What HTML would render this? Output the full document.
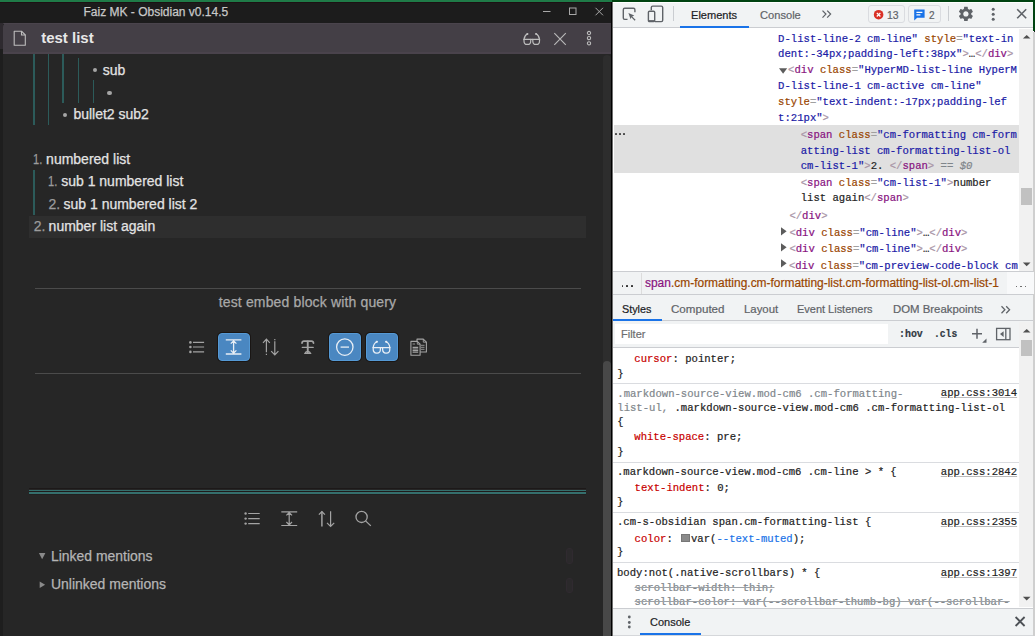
<!DOCTYPE html>
<html><head><meta charset="utf-8"><style>
html,body{margin:0;padding:0;width:1035px;height:636px;overflow:hidden;background:#1d1c1d;position:relative}
body>div,body>span{position:absolute;box-sizing:border-box}
.S{font-family:"Liberation Sans", sans-serif;white-space:pre}
.dk{-webkit-text-stroke:0.25px currentColor}
.dm span{-webkit-text-stroke:0.2px currentColor}
.dm{-webkit-text-stroke:0.2px currentColor}
.M{font-family:"Liberation Mono", monospace;white-space:pre}
</style></head><body>
<div style="left:0px;top:0px;width:612px;height:1.6px;background:#1f7b48"></div>
<div style="left:0px;top:1.6px;width:612px;height:1px;background:#1c1113"></div>
<div style="left:0px;top:2.6px;width:612px;height:20.4px;background:#1c1c1c"></div>
<span class="S dk" style="left:83.50px;top:5.54px;font-size:12px;line-height:12px;color:#c8c8c8;font-weight:400;">Faiz MK - Obsidian v0.14.5</span>
<svg style="position:absolute;left:540px;top:4px;" width="66" height="16" viewBox="0 0 66 16"><path d="M3 7.5h7.5" stroke="#a8a8a8" stroke-width="1"/><rect x="29.5" y="4" width="6.5" height="6.5" fill="none" stroke="#a8a8a8" stroke-width="1"/><path d="M55.5 3.8l7.5 7.5M63 3.8l-7.5 7.5" stroke="#a8a8a8" stroke-width="1"/></svg>
<div style="left:0px;top:23px;width:3px;height:26px;background:#2e2a2f"></div>
<div style="left:0px;top:49px;width:3px;height:587px;background:#1e1e1e"></div>
<div style="left:3px;top:23px;width:608px;height:31px;background:#443f46;border-top-left-radius:4px"></div>
<div style="left:3px;top:23px;width:608px;height:1px;background:#4a444c;border-top-left-radius:4px"></div>
<div style="left:3px;top:52.3px;width:608px;height:2px;background:#4a434c"></div>
<svg style="position:absolute;left:12px;top:29px;" width="16" height="18" viewBox="0 0 16 18"><path d="M2.2 2.2h7.3l3.8 3.8v10.3H2.2z" fill="none" stroke="#bdbdbd" stroke-width="1.1" stroke-linejoin="round"/><path d="M9.5 2.2v3.8h3.8" fill="none" stroke="#bdbdbd" stroke-width="1.1"/></svg>
<span class="S nostroke" style="left:41.20px;top:30.20px;font-size:15px;line-height:15px;color:#e8e8e8;font-weight:700;">test list</span>
<svg style="position:absolute;left:0;top:0" width="1035" height="636"><g transform="translate(524,39.4) scale(0.935)" fill="none" stroke="#bdbdbd" stroke-width="1.283" stroke-linecap="round"><path d="M0 0H16.6"/><path d="M0 0v1.6c0 2.1 1.4 3.8 3.3 3.8h.6c1.9 0 3.3-1.7 3.3-3.8V0"/><path d="M9.4 0v1.6c0 2.1 1.4 3.8 3.3 3.8h.6c1.9 0 3.3-1.7 3.3-3.8V0"/><path d="M0 0C0.2-2.6 1.5-4.9 3.8-6.1"/><circle cx="3.6" cy="-5.8" r="0.5"/><path d="M16.6 0C16.4-2.6 15.1-4.9 12.8-6.1"/><circle cx="13" cy="-5.8" r="0.5"/></g></svg>
<svg style="position:absolute;left:552px;top:31px;" width="16" height="16" viewBox="0 0 16 16"><path d="M2.3 2.2l11.5 11.7M13.8 2.2L2.3 13.9" stroke="#b8b8b8" stroke-width="1.15"/></svg>
<svg style="position:absolute;left:584px;top:29px;" width="10" height="18" viewBox="0 0 10 18"><g fill="none" stroke="#bdbdbd" stroke-width="1.05"><circle cx="5" cy="4" r="1.65"/><circle cx="5" cy="9.1" r="1.65"/><circle cx="5" cy="14.3" r="1.65"/></g></svg>
<div style="left:3px;top:54.3px;width:608px;height:582px;background:#262626"></div>
<div style="left:602.5px;top:55px;width:8.5px;height:581px;background:#2d2d2d;border-radius:4px 4px 0 0"></div>
<div style="left:603px;top:361px;width:8px;height:275px;background:#484848;border-radius:4px 4px 0 0"></div>
<div style="left:611px;top:23px;width:2px;height:613px;background:#141414"></div>
<div style="left:33.4px;top:54px;width:1.25px;height:70.8px;background:#2c5b5a"></div>
<div style="left:47.9px;top:54px;width:1.25px;height:70.8px;background:#2c5b5a"></div>
<div style="left:62.4px;top:54px;width:1.25px;height:48.599999999999994px;background:#2c5b5a"></div>
<div style="left:77.9px;top:57.9px;width:1.25px;height:44.699999999999996px;background:#2c5b5a"></div>
<div style="left:92.7px;top:80.2px;width:1.25px;height:22.39999999999999px;background:#2c5b5a"></div>
<div style="left:92.5px;top:67.8px;width:4.6px;height:4.6px;background:#a5a5a5;border-radius:50%"></div>
<span class="S dk" style="left:102.70px;top:62.65px;font-size:14px;line-height:14px;color:#e3e3e3;font-weight:400;">sub</span>
<div style="left:107.2px;top:90.5px;width:4.6px;height:4.6px;background:#a5a5a5;border-radius:50%"></div>
<div style="left:62.7px;top:112.7px;width:4.6px;height:4.6px;background:#a5a5a5;border-radius:50%"></div>
<span class="S dk" style="left:73.40px;top:107.25px;font-size:14px;line-height:14px;color:#e3e3e3;font-weight:400;">bullet2 sub2</span>
<span class="S dk" style="left:33.30px;top:152.15px;font-size:14px;line-height:14px;color:#9c9c9c;font-weight:400;transform:scaleX(0.7965);transform-origin:0 0;">1.</span>
<span class="S dk" style="left:46.10px;top:152.15px;font-size:14px;line-height:14px;color:#e3e3e3;font-weight:400;">numbered list</span>
<div style="left:33.4px;top:170.4px;width:1.25px;height:44.7px;background:#2c5b5a"></div>
<span class="S dk" style="left:47.90px;top:174.45px;font-size:14px;line-height:14px;color:#9c9c9c;font-weight:400;transform:scaleX(0.7965);transform-origin:0 0;">1.</span>
<span class="S dk" style="left:61.20px;top:174.45px;font-size:14px;line-height:14px;color:#e3e3e3;font-weight:400;">sub 1 numbered list</span>
<span class="S dk" style="left:48.50px;top:196.95px;font-size:14px;line-height:14px;color:#9c9c9c;font-weight:400;">2.</span>
<span class="S dk" style="left:63.50px;top:196.95px;font-size:14px;line-height:14px;color:#e3e3e3;font-weight:400;">sub 1 numbered list 2</span>
<div style="left:29.4px;top:215.5px;width:556.6px;height:22.5px;background:#2e2e2e"></div>
<span class="S dk" style="left:33.80px;top:218.95px;font-size:14px;line-height:14px;color:#9c9c9c;font-weight:400;">2.</span>
<span class="S dk" style="left:48.60px;top:218.95px;font-size:14px;line-height:14px;color:#e3e3e3;font-weight:400;">number list again</span>
<div style="left:34.7px;top:288px;width:546px;height:1px;background:#4b4b4b"></div>
<div style="left:34.7px;top:373px;width:546px;height:1px;background:#4b4b4b"></div>
<span class="S dk" style="left:218.70px;top:295.35px;font-size:14px;line-height:14px;color:#a9a9a9;font-weight:400;letter-spacing:0.15px">test embed block with query</span>
<svg style="position:absolute;left:186px;top:338px;" width="20" height="17" viewBox="0 0 20 17"><g fill="#a3a3a3"><circle cx="4.4" cy="4.4" r="1.3"/><circle cx="4.4" cy="9" r="1.3"/><circle cx="4.4" cy="13.9" r="1.3"/></g><g stroke="#a3a3a3" stroke-width="1.2"><path d="M7 4.4h11.1M7 9h11.1M7 13.9h11.1"/></g></svg>
<div style="left:217.5px;top:333px;width:32.5px;height:27.5px;background:#4a87c1;border-radius:4px;border:1px solid #5599d4;box-shadow:0 0 0 1px #1a1614"></div>
<svg style="position:absolute;left:222px;top:336px;" width="24" height="22" viewBox="0 0 24 22"><g stroke="#e8eef5" stroke-width="1.3" fill="none"><path d="M3.8 3.8h15.6M3.8 18h15.6M11.6 5v12M8.8 7.6l2.8-2.8 2.8 2.8M8.8 14.4l2.8 2.8 2.8-2.8"/></g></svg>
<svg style="position:absolute;left:260px;top:336px;" width="22" height="22" viewBox="0 0 22 22"><g stroke="#a3a3a3" stroke-width="1.2" fill="none"><path d="M6.4 3.2v13M3 6.8l3.4-3.6 3.4 3.6M6.4 17.8v1.3M14.8 3v1.3M14.8 5.3v13.7M11.2 15.2l3.6 3.8 3.6-3.8"/></g></svg>
<svg style="position:absolute;left:298px;top:336px;" width="20" height="20" viewBox="0 0 20 20"><g stroke="#a3a3a3" fill="none" stroke-linecap="round"><path d="M4 7.2Q4.2 5.2 6 5.2H13.5Q15.3 5.2 15.5 7.2" stroke-width="1.7"/><path d="M9.75 5.5v11" stroke-width="1.9"/><path d="M6.9 17.4Q7.5 15.6 9.75 15.3Q12 15.6 12.6 17.4z" stroke-width="1.3"/><path d="M4.3 11.4h10.9" stroke-width="1.3"/></g></svg>
<div style="left:328.7px;top:333.2px;width:32.4px;height:27.4px;background:#4a87c1;border-radius:4px;border:1px solid #5599d4;box-shadow:0 0 0 1px #1a1614"></div>
<svg style="position:absolute;left:334px;top:336px;" width="22" height="22" viewBox="0 0 22 22"><g stroke="#e8eef5" stroke-width="1.3" fill="none"><circle cx="10.8" cy="11.1" r="8.2"/><path d="M6.6 11.1h8.4"/></g></svg>
<div style="left:366px;top:333.2px;width:32.2px;height:27.4px;background:#4a87c1;border-radius:4px;border:1px solid #5599d4;box-shadow:0 0 0 1px #1a1614"></div>
<svg style="position:absolute;left:0;top:0" width="1035" height="636"><g transform="translate(373.2,347.6) scale(1.0)" fill="none" stroke="#e8eef5" stroke-width="1.250" stroke-linecap="round"><path d="M0 0H16.6"/><path d="M0 0v1.6c0 2.1 1.4 3.8 3.3 3.8h.6c1.9 0 3.3-1.7 3.3-3.8V0"/><path d="M9.4 0v1.6c0 2.1 1.4 3.8 3.3 3.8h.6c1.9 0 3.3-1.7 3.3-3.8V0"/><path d="M0 0C0.2-2.6 1.5-4.9 3.8-6.1"/><circle cx="3.6" cy="-5.8" r="0.5"/><path d="M16.6 0C16.4-2.6 15.1-4.9 12.8-6.1"/><circle cx="13" cy="-5.8" r="0.5"/></g></svg>
<svg style="position:absolute;left:406px;top:334px;" width="26" height="26" viewBox="0 0 26 26"><g fill="#262626" stroke="#a3a3a3" stroke-width="1.1" stroke-linejoin="round"><path d="M11 5.1h6.3l3.1 3.1V18H11z"/><path d="M4.9 7.4h6.4l2.8 2.8v11.1H4.9z"/></g><g stroke="#a3a3a3" stroke-width="0.9" fill="none"><path d="M17.3 5.1v3.1h3.1M11.3 7.4v2.8h2.8"/><path d="M15 11.3h3.5M15 13.3h3.5M15 15.3h3.5"/><path d="M6.6 13.4h5.6M6.6 15h5.6M6.6 16.6h5.6M6.6 18.2h5.6" stroke-width="1.1"/><path d="M6.6 10h2.5"/></g></svg>
<div style="left:29px;top:488.2px;width:557px;height:1px;background:#1d1919"></div>
<div style="left:29px;top:489.6px;width:557px;height:1.5px;background:#356f6d"></div>
<div style="left:29px;top:491px;width:557px;height:1px;background:#1f1b1b"></div>
<div style="left:29px;top:492px;width:557px;height:1.5px;background:#356f6d"></div>
<div style="left:29px;top:493.6px;width:557px;height:1px;background:#222020"></div>
<svg style="position:absolute;left:242px;top:509px;" width="20" height="18" viewBox="0 0 20 18"><g fill="#a3a3a3"><circle cx="3.6" cy="4.5" r="1.2"/><circle cx="3.6" cy="9.6" r="1.2"/><circle cx="3.6" cy="14.6" r="1.2"/></g><g stroke="#a3a3a3" stroke-width="1.1"><path d="M6.2 4.5h11.5M6.2 9.6h11.5M6.2 14.6h11.5"/></g></svg>
<svg style="position:absolute;left:279px;top:508px;" width="20" height="20" viewBox="0 0 20 20"><g stroke="#a3a3a3" stroke-width="1.2" fill="none"><path d="M2.3 3.8h15.9M2.3 17.5h15.9M10.2 4.5v12.4M7.4 7.4l2.8-2.8 2.8 2.8M7.4 14l2.8 2.8 2.8-2.8"/></g></svg>
<svg style="position:absolute;left:315px;top:508px;" width="22" height="20" viewBox="0 0 22 20"><g stroke="#a3a3a3" fill="none"><path d="M6.9 3.6v15" stroke-width="1.5"/><path d="M3.9 6.6l3-3 3 3" stroke-width="1.3"/><path d="M15.6 3.2v15.3M12 14.8l3.6 3.7 3.6-3.7" stroke-width="1.2"/></g></svg>
<svg style="position:absolute;left:353px;top:508px;" width="20" height="20" viewBox="0 0 20 20"><g stroke="#a3a3a3" stroke-width="1.3" fill="none"><circle cx="8.6" cy="8.9" r="5.6"/><path d="M12.6 12.9l5.2 5"/></g></svg>
<svg style="position:absolute;left:37px;top:550px;" width="10" height="12" viewBox="0 0 10 12"><path d="M1.9 3h6.5L5.15 9.3z" fill="#8a8a8a"/></svg>
<span class="S dk" style="left:51.30px;top:548.75px;font-size:14px;line-height:14px;color:#b5b5b5;font-weight:400;transform:scaleX(0.9956);transform-origin:0 0;">Linked mentions</span>
<svg style="position:absolute;left:37px;top:579px;" width="10" height="12" viewBox="0 0 10 12"><path d="M2.7 2.4v6.5L8.1 5.65z" fill="#8a8a8a"/></svg>
<span class="S dk" style="left:51.30px;top:577.35px;font-size:14px;line-height:14px;color:#b5b5b5;font-weight:400;transform:scaleX(0.9985);transform-origin:0 0;">Unlinked mentions</span>
<div style="left:566.3px;top:548.3px;width:6.5px;height:15.9px;background:#2b292b;border-radius:3px;border:1px solid #302a30"></div>
<div style="left:566.3px;top:577.5px;width:6.5px;height:15.8px;background:#2b292b;border-radius:3px;border:1px solid #302a30"></div>
<div style="left:612px;top:0px;width:423px;height:1.6px;background:#004311"></div>
<div style="left:613px;top:1.6px;width:421px;height:634.4px;background:#ffffff"></div>
<div style="left:611px;top:1.6px;width:1.2px;height:634.4px;background:#000"></div>
<div style="left:612.2px;top:1.6px;width:1.1px;height:634.4px;background:#6e6e6e"></div>
<div style="left:1033.3px;top:0px;width:1.7px;height:31px;background:#004311"></div>
<div style="left:1033.3px;top:32px;width:1.7px;height:604px;background:#cfcfcf"></div>
<div style="left:613.3px;top:3px;width:420px;height:25px;background:#f1f3f4;border-bottom:1px solid #cbcdd1"></div>
<svg style="position:absolute;left:620px;top:5px;" width="20" height="18" viewBox="0 0 20 18"><path d="M7.5 14.4H4.7Q3.3 14.4 3.3 13V4.7Q3.3 3.3 4.7 3.3H13.5Q14.9 3.3 14.9 4.7V7.2" fill="none" stroke="#5f6368" stroke-width="1.4"/><path d="M8.4 7.9L14.3 10.6 12.2 11.4 15.6 14.8 14.7 15.7 11.3 12.3 10.6 14.3z" fill="#5f6368"/></svg>
<svg style="position:absolute;left:646px;top:4px;" width="20" height="20" viewBox="0 0 20 20"><path d="M5.3 6.2V3.5Q5.3 2.1 6.7 2.1H15.3Q16.7 2.1 16.7 3.5V16.2Q16.7 17.6 15.3 17.6H8.7" fill="none" stroke="#5f6368" stroke-width="1.4"/><rect x="2.4" y="7.2" width="6.3" height="10.4" rx="1.1" fill="none" stroke="#5f6368" stroke-width="1.4"/><path d="M2.4 16.8h6.3" stroke="#5f6368" stroke-width="1.4"/></svg>
<div style="left:673px;top:6.4px;width:1px;height:15px;background:#cacdd1"></div>
<span class="S dm" style="left:691.30px;top:10.19px;font-size:11px;line-height:11px;color:#202124;font-weight:400;transform:scaleX(1.0054);transform-origin:0 0;">Elements</span>
<div style="left:679.6px;top:26px;width:69.4px;height:2px;background:#1a73e8"></div>
<span class="S dm" style="left:760.40px;top:10.19px;font-size:11px;line-height:11px;color:#5f6368;font-weight:400;transform:scaleX(1.0109);transform-origin:0 0;">Console</span>
<svg style="position:absolute;left:818px;top:7px;" width="16" height="14" viewBox="0 0 16 14"><g fill="none" stroke="#5f6368" stroke-width="1.25"><path d="M4.5 3.6l3.4 3.5-3.4 3.5M9.2 3.6l3.4 3.5-3.4 3.5"/></g></svg>
<div style="left:867.5px;top:5.1px;width:37.2px;height:18.2px;border:1px solid #dadce0;border-radius:3px;background:#f1f3f4"></div>
<svg style="position:absolute;left:872px;top:8.5px;" width="14" height="12" viewBox="0 0 14 12"><circle cx="6.6" cy="5.7" r="4.8" fill="#d93025"/><path d="M4.8 3.9l3.6 3.6M8.4 3.9L4.8 7.5" stroke="#fff" stroke-width="1.3"/></svg>
<span class="S dm" style="left:886.80px;top:9.69px;font-size:11px;line-height:11px;color:#5f6368;font-weight:400;transform:scaleX(0.9481);transform-origin:0 0;">13</span>
<div style="left:907.7px;top:5.1px;width:33.5px;height:18.2px;border:1px solid #dadce0;border-radius:3px;background:#f1f3f4"></div>
<svg style="position:absolute;left:912px;top:7px;" width="14" height="14" viewBox="0 0 14 14"><path d="M2.2 2.6h10.4v8.2H5.2l-3 2.6z" fill="#1a73e8"/><path d="M4.4 5.4h6M4.4 7.9h4" stroke="#fff" stroke-width="1.1"/></svg>
<span class="S dm" style="left:928.80px;top:9.69px;font-size:11px;line-height:11px;color:#5f6368;font-weight:400;transform:scaleX(0.9154);transform-origin:0 0;">2</span>
<div style="left:948px;top:6.4px;width:1px;height:15px;background:#cacdd1"></div>
<svg style="position:absolute;left:956.8px;top:4.9px;overflow:visible" width="18" height="18"><path transform="scale(0.742)" fill="#5f6368" d="M19.14,12.94c0.04-0.3,0.06-0.61,0.06-0.94c0-0.32-0.02-0.64-0.07-0.94l2.03-1.58c0.18-0.14,0.23-0.41,0.12-0.61 l-1.92-3.32c-0.12-0.22-0.37-0.29-0.59-0.22l-2.39,0.96c-0.5-0.38-1.030-0.7-1.62-0.94L14.4,2.81c-0.04-0.24-0.24-0.41-0.48-0.41 h-3.84c-0.24,0-0.43,0.17-0.47,0.41L9.25,5.35C8.66,5.59,8.12,5.92,7.63,6.29L5.24,5.33c-0.22-0.08-0.47,0-0.59,0.22L2.74,8.87 C2.62,9.08,2.66,9.34,2.86,9.48l2.03,1.58C4.84,11.36,4.8,11.69,4.8,12s0.02,0.64,0.07,0.94l-2.03,1.58 c-0.18,0.14-0.23,0.41-0.12,0.61l1.92,3.32c0.12,0.22,0.37,0.29,0.59,0.22l2.390-0.96c0.5,0.38,1.03,0.7,1.62,0.94l0.36,2.54 c0.05,0.24,0.24,0.41,0.48,0.41h3.84c0.24,0,0.44-0.17,0.47-0.41l0.36-2.54c0.59-0.24,1.13-0.56,1.62-0.94l2.39,0.96 c0.22,0.08,0.47,0,0.59-0.22l1.92-3.32c0.12-0.22,0.07-0.47-0.12-0.61L19.14,12.94z M12,15.6c-1.98,0-3.6-1.62-3.6-3.6 s1.62-3.6,3.6-3.6s3.6,1.62,3.6,3.6S13.98,15.6,12,15.6z"/></svg>
<svg style="position:absolute;left:988px;top:6px;" width="10" height="16" viewBox="0 0 10 16"><g fill="#5f6368"><circle cx="5.2" cy="3.2" r="1.5"/><circle cx="5.2" cy="8.2" r="1.5"/><circle cx="5.2" cy="13.3" r="1.5"/></g></svg>
<svg style="position:absolute;left:1014px;top:6px;" width="16" height="16" viewBox="0 0 16 16"><path d="M3.2 3.3l9 9M12.2 3.3l-9 9" stroke="#5f6368" stroke-width="1.6"/></svg>
<div style="left:614.3px;top:125.2px;width:404.9px;height:48.3px;background:#e0e0e0"></div>
<span class="M dm" style="left:778.10px;top:33.68px;font-size:10.6px;line-height:10.6px;color:#222;font-weight:400;"><span style="color:#1a1aa6">D-list-line-2 cm-line</span><span style="color:#1a1aa6">&quot;</span><span style="color:#a894a6"> </span><span style="color:#994500">style</span><span style="color:#a0a0a0">=</span><span style="color:#1a1aa6">&quot;text-in</span></span>
<span class="M dm" style="left:778.10px;top:48.98px;font-size:10.6px;line-height:10.6px;color:#222;font-weight:400;"><span style="color:#1a1aa6">dent:-34px;padding-left:38px&quot;</span><span style="color:#a894a6">&gt;</span><span style="color:#222">…</span><span style="color:#a894a6">&lt;/</span><span style="color:#881280">div</span><span style="color:#a894a6">&gt;</span></span>
<svg style="position:absolute;left:778px;top:66px;" width="10" height="10" viewBox="0 0 10 10"><path d="M1 2.2h8.2L5.1 7.8z" fill="#5c5c5c"/></svg>
<span class="M dm" style="left:788.10px;top:65.48px;font-size:10.6px;line-height:10.6px;color:#222;font-weight:400;"><span style="color:#a894a6">&lt;</span><span style="color:#881280">div</span><span style="color:#a894a6"> </span><span style="color:#994500">class</span><span style="color:#a0a0a0">=</span><span style="color:#1a1aa6">&quot;HyperMD-list-line HyperM</span></span>
<span class="M dm" style="left:778.10px;top:81.18px;font-size:10.6px;line-height:10.6px;color:#222;font-weight:400;"><span style="color:#1a1aa6">D-list-line-1 cm-active cm-line&quot;</span></span>
<span class="M dm" style="left:778.10px;top:97.28px;font-size:10.6px;line-height:10.6px;color:#222;font-weight:400;"><span style="color:#994500">style</span><span style="color:#a0a0a0">=</span><span style="color:#1a1aa6">&quot;text-indent:-17px;padding-lef</span></span>
<span class="M dm" style="left:778.10px;top:112.68px;font-size:10.6px;line-height:10.6px;color:#222;font-weight:400;"><span style="color:#1a1aa6">t:21px&quot;</span><span style="color:#a894a6">&gt;</span></span>
<div style="left:615.2px;top:132.9px;width:2px;height:2px;background:#4a4a4a;border-radius:0.5px"></div>
<div style="left:619.1px;top:132.9px;width:2px;height:2px;background:#4a4a4a;border-radius:0.5px"></div>
<div style="left:623.2px;top:132.9px;width:2px;height:2px;background:#4a4a4a;border-radius:0.5px"></div>
<span class="M dm" style="left:800.70px;top:130.28px;font-size:10.6px;line-height:10.6px;color:#222;font-weight:400;"><span style="color:#a894a6">&lt;</span><span style="color:#881280">span</span><span style="color:#a894a6"> </span><span style="color:#994500">class</span><span style="color:#a0a0a0">=</span><span style="color:#1a1aa6">&quot;cm-formatting cm-form</span></span>
<span class="M dm" style="left:800.70px;top:145.58px;font-size:10.6px;line-height:10.6px;color:#222;font-weight:400;"><span style="color:#1a1aa6">atting-list cm-formatting-list-ol</span></span>
<span class="M dm" style="left:800.70px;top:160.68px;font-size:10.6px;line-height:10.6px;color:#222;font-weight:400;"><span style="color:#1a1aa6">cm-list-1&quot;</span><span style="color:#a894a6">&gt;</span><span style="color:#222">2. </span><span style="color:#a894a6">&lt;/</span><span style="color:#881280">span</span><span style="color:#a894a6">&gt;</span><span style="color:#222"> </span><span style="color:#80868b;font-style:italic">== $0</span></span>
<span class="M dm" style="left:800.70px;top:177.88px;font-size:10.6px;line-height:10.6px;color:#222;font-weight:400;"><span style="color:#a894a6">&lt;</span><span style="color:#881280">span</span><span style="color:#a894a6"> </span><span style="color:#994500">class</span><span style="color:#a0a0a0">=</span><span style="color:#1a1aa6">&quot;cm-list-1&quot;</span><span style="color:#a894a6">&gt;</span><span style="color:#222">number</span></span>
<span class="M dm" style="left:800.70px;top:193.18px;font-size:10.6px;line-height:10.6px;color:#222;font-weight:400;"><span style="color:#222">list again</span><span style="color:#a894a6">&lt;/</span><span style="color:#881280">span</span><span style="color:#a894a6">&gt;</span></span>
<span class="M dm" style="left:789.40px;top:211.38px;font-size:10.6px;line-height:10.6px;color:#222;font-weight:400;"><span style="color:#a894a6">&lt;/</span><span style="color:#881280">div</span><span style="color:#a894a6">&gt;</span></span>
<svg style="position:absolute;left:779px;top:225.8px;" width="10" height="10" viewBox="0 0 10 10"><path d="M2 1.2v8.2L7.6 5.3z" fill="#5c5c5c"/></svg>
<span class="M dm" style="left:789.40px;top:228.18px;font-size:10.6px;line-height:10.6px;color:#222;font-weight:400;"><span style="color:#a894a6">&lt;</span><span style="color:#881280">div</span><span style="color:#a894a6"> </span><span style="color:#994500">class</span><span style="color:#a0a0a0">=</span><span style="color:#1a1aa6">&quot;cm-line&quot;</span><span style="color:#a894a6">&gt;</span><span style="color:#222">…</span><span style="color:#a894a6">&lt;/</span><span style="color:#881280">div</span><span style="color:#a894a6">&gt;</span></span>
<svg style="position:absolute;left:779px;top:241.8px;" width="10" height="10" viewBox="0 0 10 10"><path d="M2 1.2v8.2L7.6 5.3z" fill="#5c5c5c"/></svg>
<span class="M dm" style="left:789.40px;top:244.18px;font-size:10.6px;line-height:10.6px;color:#222;font-weight:400;"><span style="color:#a894a6">&lt;</span><span style="color:#881280">div</span><span style="color:#a894a6"> </span><span style="color:#994500">class</span><span style="color:#a0a0a0">=</span><span style="color:#1a1aa6">&quot;cm-line&quot;</span><span style="color:#a894a6">&gt;</span><span style="color:#222">…</span><span style="color:#a894a6">&lt;/</span><span style="color:#881280">div</span><span style="color:#a894a6">&gt;</span></span>
<svg style="position:absolute;left:779px;top:258.3px;" width="10" height="10" viewBox="0 0 10 10"><path d="M2 1.2v8.2L7.6 5.3z" fill="#5c5c5c"/></svg>
<span class="M dm" style="left:788.90px;top:260.68px;font-size:10.6px;line-height:10.6px;color:#222;font-weight:400;"><span style="color:#a894a6">&lt;</span><span style="color:#881280">div</span><span style="color:#a894a6"> </span><span style="color:#994500">class</span><span style="color:#a0a0a0">=</span><span style="color:#1a1aa6">&quot;cm-preview-code-block cm</span></span>
<div style="left:1019.2px;top:28.5px;width:14.1px;height:242.5px;background:#f1f1f1"></div>
<svg style="position:absolute;left:1019px;top:31px;" width="15" height="10" viewBox="0 0 15 10"><path d="M3.9 7.6h7.6L7.7 4z" fill="#505050"/></svg>
<svg style="position:absolute;left:1019px;top:340px;" width="15" height="10" viewBox="0 0 15 10"></svg>
<div style="left:1021px;top:188px;width:11px;height:17px;background:#c1c1c1"></div>
<svg style="position:absolute;left:1019px;top:260px;" width="15" height="10" viewBox="0 0 15 10"><path d="M3.9 2.6h7.6L7.7 6.2z" fill="#505050"/></svg>
<div style="left:613.3px;top:271px;width:420px;height:24px;background:#f1f3f4;border-top:1px solid #cbcdd1;border-bottom:1px solid #cbcdd1"></div>
<div style="left:621.7px;top:285.4px;width:1.8px;height:1.8px;background:#333;border-radius:0.5px"></div>
<div style="left:626.4px;top:285.4px;width:1.8px;height:1.8px;background:#333;border-radius:0.5px"></div>
<div style="left:631.1px;top:285.4px;width:1.8px;height:1.8px;background:#333;border-radius:0.5px"></div>
<div style="left:641px;top:272.5px;width:1px;height:21px;background:#dcdcdc"></div>
<span class="S dm" style="left:645.40px;top:277.14px;font-size:12px;line-height:12px;color:#994500;font-weight:400;transform:scaleX(0.9961);transform-origin:0 0;"><span style="color:#881280">span</span><span style="color:#994500">.cm-formatting.cm-formatting-list.cm-formatting-list-ol.cm-list-1</span></span>
<div style="left:1006.8px;top:272.2px;width:26.9px;height:21.4px;background:#f8f9fa"></div>
<div style="left:1015.9000000000001px;top:285.5px;width:1.6px;height:1.6px;background:#6f6f6f"></div>
<div style="left:1020.1px;top:285.5px;width:1.6px;height:1.6px;background:#6f6f6f"></div>
<div style="left:1024.9px;top:285.5px;width:1.6px;height:1.6px;background:#6f6f6f"></div>
<div style="left:613.3px;top:294.5px;width:420px;height:26.5px;background:#f1f3f4;border-bottom:1px solid #cbcdd1"></div>
<span class="S dm" style="left:622.40px;top:304.49px;font-size:11px;line-height:11px;color:#202124;font-weight:400;transform:scaleX(0.9815);transform-origin:0 0;">Styles</span>
<div style="left:613.3px;top:319px;width:49px;height:2px;background:#1a73e8"></div>
<span class="S dm" style="left:670.90px;top:304.49px;font-size:11px;line-height:11px;color:#5f6368;font-weight:400;transform:scaleX(1.0542);transform-origin:0 0;">Computed</span>
<span class="S dm" style="left:744.10px;top:304.49px;font-size:11px;line-height:11px;color:#5f6368;font-weight:400;transform:scaleX(1.0355);transform-origin:0 0;">Layout</span>
<span class="S dm" style="left:797.10px;top:304.49px;font-size:11px;line-height:11px;color:#5f6368;font-weight:400;transform:scaleX(0.9971);transform-origin:0 0;">Event Listeners</span>
<span class="S dm" style="left:892.50px;top:304.49px;font-size:11px;line-height:11px;color:#5f6368;font-weight:400;transform:scaleX(1.0345);transform-origin:0 0;">DOM Breakpoints</span>
<svg style="position:absolute;left:998px;top:303px;" width="16" height="14" viewBox="0 0 16 14"><g fill="none" stroke="#5f6368" stroke-width="1.25"><path d="M3.5 3.2l3.4 3.5-3.4 3.5M8.2 3.2l3.4 3.5-3.4 3.5"/></g></svg>
<div style="left:613.3px;top:321px;width:420px;height:26.8px;background:#f1f3f4;border-bottom:1px solid #cbcdd1"></div>
<div style="left:614.5px;top:324px;width:273.4px;height:19.6px;background:#ffffff"></div>
<span class="S dm" style="left:620.50px;top:328.59px;font-size:11px;line-height:11px;color:#6e6e6e;font-weight:400;transform:scaleX(0.9982);transform-origin:0 0;">Filter</span>
<span class="M dm" style="left:898.60px;top:329.36px;font-size:10.5px;line-height:10.5px;color:#303942;font-weight:700;transform:scaleX(0.9443);transform-origin:0 0;">:hov</span>
<span class="M dm" style="left:934.00px;top:329.36px;font-size:10.5px;line-height:10.5px;color:#303942;font-weight:700;transform:scaleX(0.9205);transform-origin:0 0;">.cls</span>
<svg style="position:absolute;left:968px;top:325px;" width="20" height="20" viewBox="0 0 20 20"><path d="M4 8.8h10M9 3.8v10" stroke="#5f6368" stroke-width="1.5"/><path d="M18.5 13.5v4.3h-4.3z" fill="#5f6368"/></svg>
<svg style="position:absolute;left:994px;top:326px;" width="18" height="16" viewBox="0 0 18 16"><g fill="none" stroke="#5f6368" stroke-width="1.3"><rect x="2.6" y="2.4" width="13.4" height="11.3"/><path d="M11.8 2.4v11.3"/></g><path d="M9.6 5.2v5.8L6 8.1z" fill="#5f6368"/></svg>
<div style="left:1019.2px;top:347px;width:14.1px;height:260px;background:#f1f1f1"></div>
<svg style="position:absolute;left:1019px;top:326px;" width="15" height="10" viewBox="0 0 15 10"><path d="M3.9 7.6h7.6L7.7 4z" fill="#505050"/></svg>
<div style="left:1019.2px;top:322px;width:14.1px;height:25px;background:#f1f1f1"></div>
<svg style="position:absolute;left:1019px;top:325px;" width="15" height="10" viewBox="0 0 15 10"><path d="M3.9 7.6h7.6L7.7 4z" fill="#505050"/></svg>
<div style="left:1021px;top:340px;width:11px;height:16px;background:#c1c1c1"></div>
<svg style="position:absolute;left:1019px;top:592px;" width="15" height="10" viewBox="0 0 15 10"><path d="M3.9 4.8h7.6L7.7 8.4z" fill="#505050"/></svg>
<span class="M dm" style="left:634.30px;top:354.08px;font-size:10.6px;line-height:10.6px;color:#222222;font-weight:400;"><span style="color:#c80000">cursor</span><span style="color:#222222">: pointer;</span></span>
<span class="M dm" style="left:617.30px;top:368.58px;font-size:10.6px;line-height:10.6px;color:#222222;font-weight:400;"><span style="color:#222222">}</span></span>
<div style="left:613.3px;top:383px;width:405.9px;height:1px;background:#dadce0"></div>
<span class="M dm" style="left:617.30px;top:388.88px;font-size:10.6px;line-height:10.6px;color:#222222;font-weight:400;"><span style="color:#80868b">.markdown-source-view.mod-cm6 .cm-formatting-</span></span>
<span class="M dm" style="left:940.80px;top:388.18px;font-size:10.6px;line-height:10.6px;color:#222222;font-weight:400;text-decoration:underline;text-decoration-color:#bbb;text-underline-offset:1px">app.css:3014</span>
<span class="M dm" style="left:617.30px;top:403.38px;font-size:10.6px;line-height:10.6px;color:#222222;font-weight:400;"><span style="color:#80868b">list-ul, </span><span style="color:#222222">.markdown-source-view.mod-cm6 .cm-formatting-list-ol</span></span>
<span class="M dm" style="left:617.30px;top:416.88px;font-size:10.6px;line-height:10.6px;color:#222222;font-weight:400;"><span style="color:#222222">{</span></span>
<span class="M dm" style="left:634.30px;top:431.98px;font-size:10.6px;line-height:10.6px;color:#222222;font-weight:400;"><span style="color:#c80000">white-space</span><span style="color:#222222">: pre;</span></span>
<span class="M dm" style="left:617.30px;top:446.88px;font-size:10.6px;line-height:10.6px;color:#222222;font-weight:400;"><span style="color:#222222">}</span></span>
<div style="left:613.3px;top:462px;width:405.9px;height:1px;background:#dadce0"></div>
<span class="M dm" style="left:617.00px;top:466.58px;font-size:10.6px;line-height:10.6px;color:#222222;font-weight:400;"><span style="color:#222222">.markdown-source-view.mod-cm6 .cm-line &gt; * {</span></span>
<span class="M dm" style="left:940.80px;top:466.78px;font-size:10.6px;line-height:10.6px;color:#222222;font-weight:400;text-decoration:underline;text-decoration-color:#bbb;text-underline-offset:1px">app.css:2842</span>
<span class="M dm" style="left:634.60px;top:483.28px;font-size:10.6px;line-height:10.6px;color:#222222;font-weight:400;"><span style="color:#c80000">text-indent</span><span style="color:#222222">: 0;</span></span>
<span class="M dm" style="left:617.00px;top:496.68px;font-size:10.6px;line-height:10.6px;color:#222222;font-weight:400;"><span style="color:#222222">}</span></span>
<div style="left:613.3px;top:512px;width:405.9px;height:1px;background:#dadce0"></div>
<span class="M dm" style="left:617.00px;top:516.88px;font-size:10.6px;line-height:10.6px;color:#222222;font-weight:400;"><span style="color:#222222">.cm-s-obsidian span.cm-formatting-list {</span></span>
<span class="M dm" style="left:940.80px;top:516.58px;font-size:10.6px;line-height:10.6px;color:#222222;font-weight:400;text-decoration:underline;text-decoration-color:#bbb;text-underline-offset:1px">app.css:2355</span>
<span class="M dm" style="left:634.60px;top:533.88px;font-size:10.6px;line-height:10.6px;color:#222222;font-weight:400;"><span style="color:#c80000">color</span><span style="color:#222222">: </span></span>
<div style="left:681.2px;top:533.7px;width:9.3px;height:8.1px;background:#8a8a8a;border:1px solid #777"></div>
<span class="M dm" style="left:691.00px;top:533.88px;font-size:10.6px;line-height:10.6px;color:#222222;font-weight:400;"><span style="color:#222222">var(</span><span style="color:#1a73e8">--text-muted</span><span style="color:#222222">);</span></span>
<span class="M dm" style="left:617.00px;top:547.38px;font-size:10.6px;line-height:10.6px;color:#222222;font-weight:400;"><span style="color:#222222">}</span></span>
<div style="left:613.3px;top:562px;width:405.9px;height:1px;background:#dadce0"></div>
<span class="M dm" style="left:617.00px;top:568.08px;font-size:10.6px;line-height:10.6px;color:#222222;font-weight:400;"><span style="color:#222222">body:not(.native-scrollbars) * {</span></span>
<span class="M dm" style="left:940.80px;top:567.88px;font-size:10.6px;line-height:10.6px;color:#222222;font-weight:400;text-decoration:underline;text-decoration-color:#bbb;text-underline-offset:1px">app.css:1397</span>
<span class="M dm" style="left:634.60px;top:583.38px;font-size:10.6px;line-height:10.6px;color:#222222;font-weight:400;text-decoration:line-through;text-decoration-color:#9ea2a6"><span style="color:#80868b">scrollbar-width: thin;</span></span>
<span class="M dm" style="left:634.60px;top:597.28px;font-size:10.6px;line-height:10.6px;color:#222222;font-weight:400;text-decoration:line-through;text-decoration-color:#9ea2a6"><span style="color:#80868b">scrollbar-color: var(--scrollbar-thumb-bg) var(--scrollbar-</span></span>
<div style="left:613.3px;top:608px;width:420px;height:28px;background:#f1f3f4;border-top:1px solid #cbcdd1"></div>
<svg style="position:absolute;left:624px;top:613px;" width="10" height="18" viewBox="0 0 10 18"><g fill="#5f6368"><circle cx="5.3" cy="4" r="1.4"/><circle cx="5.3" cy="9.5" r="1.4"/><circle cx="5.3" cy="14" r="1.4"/></g></svg>
<span class="S dm" style="left:649.90px;top:617.49px;font-size:11px;line-height:11px;color:#202124;font-weight:400;transform:scaleX(0.9986);transform-origin:0 0;">Console</span>
<div style="left:640.1px;top:633px;width:60.5px;height:1.8px;background:#1a73e8"></div>
<svg style="position:absolute;left:1012px;top:613px;" width="16" height="16" viewBox="0 0 16 16"><path d="M3.6 4l9 9M12.6 4l-9 9" stroke="#4d5156" stroke-width="1.8"/></svg>
<div style="left:613.3px;top:634.6px;width:420px;height:1.4px;background:#d5d7da"></div>
</body></html>
